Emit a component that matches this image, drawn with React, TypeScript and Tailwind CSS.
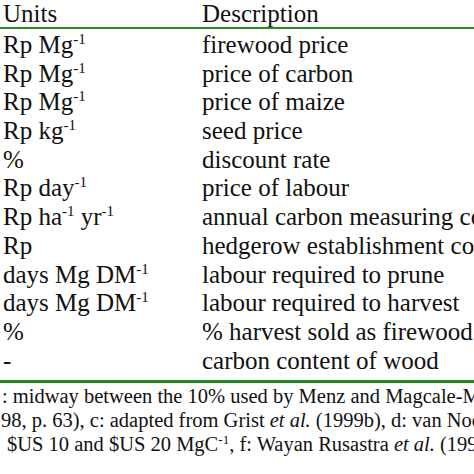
import React from 'react';

const Sup = ({ children }: { children: React.ReactNode }) => (
  <span className="relative -top-[9px] text-[15px] leading-none">{children}</span>
);

const rows: { unit: React.ReactNode; desc: string }[] = [
  { unit: <>Rp Mg<Sup>-1</Sup></>, desc: 'firewood price' },
  { unit: <>Rp Mg<Sup>-1</Sup></>, desc: 'price of carbon' },
  { unit: <>Rp Mg<Sup>-1</Sup></>, desc: 'price of maize' },
  { unit: <>Rp kg<Sup>-1</Sup></>, desc: 'seed price' },
  { unit: <>%</>, desc: 'discount rate' },
  { unit: <>Rp day<Sup>-1</Sup></>, desc: 'price of labour' },
  { unit: <>Rp ha<Sup>-1</Sup> yr<Sup>-1</Sup></>, desc: 'annual carbon measuring cost' },
  { unit: <>Rp</>, desc: 'hedgerow establishment cost' },
  { unit: <>days Mg DM<Sup>-1</Sup></>, desc: 'labour required to prune' },
  { unit: <>days Mg DM<Sup>-1</Sup></>, desc: 'labour required to harvest' },
  { unit: <>%</>, desc: '% harvest sold as firewood' },
  { unit: <>-</>, desc: 'carbon content of wood' },
];

export default function App() {
  return (
    <div
      className="w-[474px] h-[474px] overflow-hidden bg-white text-[#111]"
      style={{ fontFamily: '"Liberation Serif", "Times New Roman", serif' }}
    >
      <div className="text-[25px] leading-[28.7px] whitespace-nowrap">
        <div className="flex h-[29px] border-b-2 border-[#2a8a2a]">
          <div className="w-[202px] pl-[3px]">Units</div>
          <div>Description</div>
        </div>
        <div className="flex flex-col pt-[2px] pb-[5px] border-b-[3px] border-[#1e8a1e]">
          {rows.map((r, i) => (
            <div key={i} className="flex h-[28.7px]">
              <div className="w-[202px] shrink-0 pl-[3px]">{r.unit}</div>
              <div>{r.desc}</div>
            </div>
          ))}
        </div>
      </div>
      <div className="text-[20.5px] leading-[24px] whitespace-nowrap pt-[1px]">
        <div className="pl-[2px]">: midway between the 10% used by Menz and Magcale-Macandog</div>
        <div className="pl-[1px]">98, p. 63), c: adapted from Grist <i>et al.</i> (1999b), d: van Noordwijk</div>
        <div className="pl-[7px]">$US 10 and $US 20 MgC<span className="relative -top-[7px] text-[13px] leading-none">-1</span>, f: Wayan Rusastra <i>et al.</i> (1997)</div>
      </div>
    </div>
  );
}
